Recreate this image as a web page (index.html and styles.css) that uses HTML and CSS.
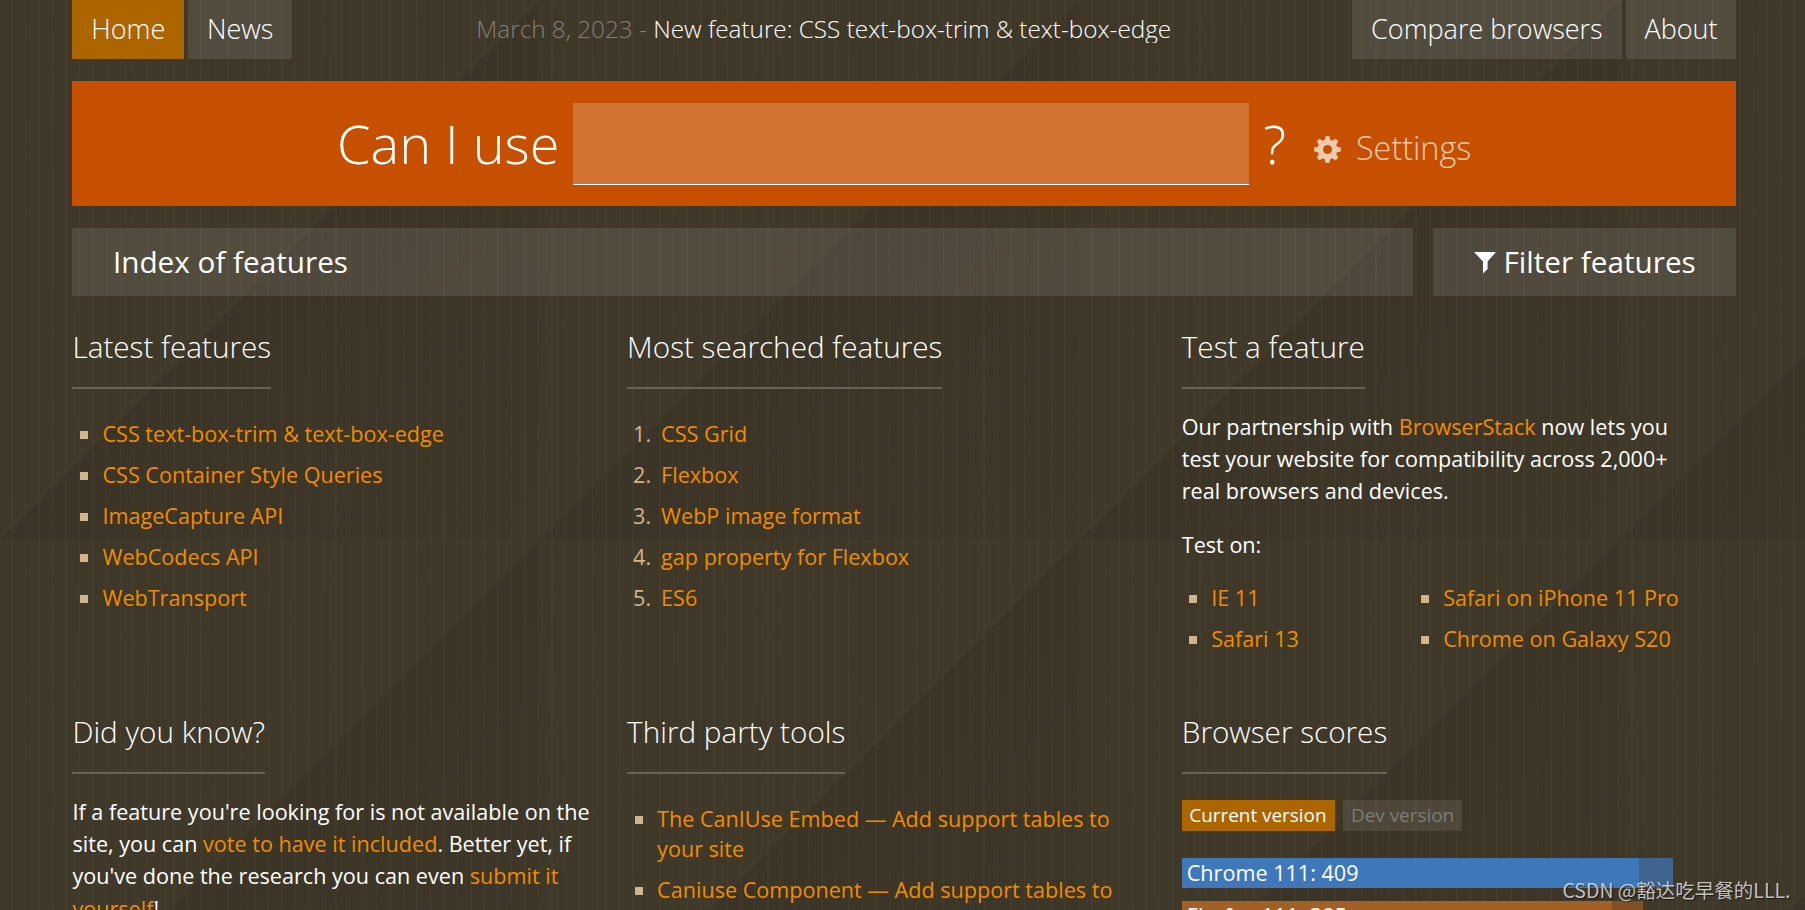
FILE: index.html
```
<!DOCTYPE html>
<html lang="en">
<head>
  <meta charset="UTF-8">
  <meta name="viewport" content="width=device-width, initial-scale=1.0">
  <title>Can I use... Support tables for HTML5, CSS3, etc</title>
  <link rel="stylesheet" href="styles.css">
</head>
<body>
  <div class="page">
    <header class="top">
      <nav class="nav">
        <a class="nav-link active" href="#">Home</a>
        <a class="nav-link" href="#">News</a>
      </nav>
      <div class="news"><span class="news-date">March 8, 2023 - </span><a href="#">New feature: CSS text-box-trim &amp; text-box-edge</a></div>
      <nav class="nav">
        <a class="nav-link" href="#">Compare browsers</a>
        <a class="nav-link" href="#">About</a>
      </nav>
    </header>

    <form class="search">
      <label class="search-label" for="feat_search">Can I use</label>
      <input class="search-input" type="text" id="feat_search">
      <span class="search-label">?</span>
      <a class="settings" href="#">
        <svg class="gear" viewBox="0 0 27 27">
          <g fill="currentColor">
            <path fill-rule="evenodd" d="M13.5 3.6a9.9 9.9 0 1 0 0 19.8a9.9 9.9 0 1 0 0-19.8zM13.5 9a4.5 4.5 0 1 1 0 9a4.5 4.5 0 1 1 0-9z"/>
            <path id="tooth" d="M10.4 5L11.6 0.3Q13.5-0.3 15.4 0.3L16.6 5z"/>
            <use href="#tooth" transform="rotate(45 13.5 13.5)"/>
            <use href="#tooth" transform="rotate(90 13.5 13.5)"/>
            <use href="#tooth" transform="rotate(135 13.5 13.5)"/>
            <use href="#tooth" transform="rotate(180 13.5 13.5)"/>
            <use href="#tooth" transform="rotate(225 13.5 13.5)"/>
            <use href="#tooth" transform="rotate(270 13.5 13.5)"/>
            <use href="#tooth" transform="rotate(315 13.5 13.5)"/>
          </g>
        </svg>
        <span>Settings</span>
      </a>
    </form>

    <div class="bar">
      <a class="bar-btn index" href="#">Index of features</a>
      <a class="bar-btn filter" href="#">
        <svg class="funnel" viewBox="0 0 22 22"><path fill="currentColor" d="M0 0H22L13.6 9.5V17L9 21.5V9.5z"/></svg>
        <span>Filter features</span>
      </a>
    </div>

    <main class="grid">
      <section class="box">
        <h2>Latest features</h2>
        <ul>
          <li><a href="#">CSS text-box-trim &amp; text-box-edge</a></li>
          <li><a href="#">CSS Container Style Queries</a></li>
          <li><a href="#">ImageCapture API</a></li>
          <li><a href="#">WebCodecs API</a></li>
          <li><a href="#">WebTransport</a></li>
        </ul>
      </section>

      <section class="box">
        <h2>Most searched features</h2>
        <ol>
          <li><a href="#">CSS Grid</a></li>
          <li><a href="#">Flexbox</a></li>
          <li><a href="#">WebP image format</a></li>
          <li><a href="#">gap property for Flexbox</a></li>
          <li><a href="#">ES6</a></li>
        </ol>
      </section>

      <section class="box">
        <h2>Test a feature</h2>
        <p>Our partnership with <a href="#">BrowserStack</a> now lets you test your website for compatibility across 2,000+ real browsers and devices.</p>
        <p>Test on:</p>
        <ul class="test-list">
          <li><a href="#">IE 11</a></li>
          <li><a href="#">Safari on iPhone 11 Pro</a></li>
          <li><a href="#">Safari 13</a></li>
          <li><a href="#">Chrome on Galaxy S20</a></li>
        </ul>
      </section>

      <section class="box">
        <h2>Did you know?</h2>
        <p>If a feature you're looking for is not available on the site, you can <a href="#">vote to have it included</a>. Better yet, if you've done the research you can even <a href="#">submit it yourself</a>!</p>
      </section>

      <section class="box">
        <h2>Third party tools</h2>
        <ul>
          <li><a href="#">The CanIUse Embed — Add support tables to your site</a></li>
          <li><a href="#">Caniuse Component — Add support tables to your presentations</a></li>
        </ul>
      </section>

      <section class="box">
        <h2>Browser scores</h2>
        <div class="versions">
          <button class="version on" type="button">Current version</button>
          <button class="version" type="button">Dev version</button>
        </div>
        <div class="score chrome">
          <div class="score-fill">Chrome 111: 409</div>
        </div>
        <div class="score firefox">
          <div class="score-fill">Firefox 111: 385</div>
        </div>
      </section>
    </main>
  </div>
  <div class="watermark">CSDN @豁达吃早餐的LLL.</div>
</body>
</html>
```
FILE: styles.css
```
* {
  box-sizing: border-box;
}
html {
  height: 100%;
  overflow: hidden;
}
body {
  margin: 0;
  height: 910px;
  overflow: hidden;
  color: #fff;
  font-family: "Open Sans", "Noto Sans", sans-serif;
  font-size: 21.6px;
  line-height: 1.5;
  background-color: #3f3829;
  background-image:
    repeating-linear-gradient(90deg, transparent 0, transparent 11.5px, rgba(255, 255, 255, 0.025) 11.5px, rgba(255, 255, 255, 0.025) 13px, transparent 13px, transparent 13.5px),
    linear-gradient(135deg, #3f3829 0%, #403829 50%, #3c3426 50%, #3f3728 100%);
  background-size: auto, 540px 540px;
}
a {
  color: #f08c00;
  text-decoration: none;
}
.page {
  width: 1664px;
  margin-left: 72.45px;
}

/* top navigation */
.top {
  display: flex;
  justify-content: space-between;
  height: 59px;
  font-weight: 300;
}
.nav {
  display: flex;
  gap: 4px;
}
.nav-link {
  padding: 0 18.9px;
  height: 59px;
  line-height: 57px;
  font-size: 27px;
  color: #fff;
  background: rgba(255, 255, 255, 0.1);
}
.nav-link.active {
  background: #ad6500;
}
.news {
  height: 43px;
  padding-left: 3px;
  overflow: hidden;
  line-height: 57px;
  font-size: 24.3px;
  white-space: pre;
}
.news a {
  color: #fff;
}
.news-date {
  color: #857e73;
}

/* search */
.search {
  display: flex;
  height: 125px;
  margin-top: 22px;
  padding: 22px 0 0 264.6px;
  background: #c75000;
}
.search-label {
  font-size: 54px;
  font-weight: 300;
  line-height: 81px;
}
.search-input {
  width: 676px;
  height: 82px;
  margin: 0 14px 0 13.8px;
  border: 0;
  border-bottom: 1px solid #fff;
  border-radius: 0;
  outline: 0;
  background: rgba(255, 255, 255, 0.2);
}
.settings {
  display: flex;
  margin-left: 28px;
  font-size: 32.4px;
  font-weight: 300;
  line-height: 89px;
  color: #efc9b0;
}
.gear {
  width: 27px;
  height: 27px;
  margin: 33px 15px 0 0;
}

/* index + filter */
.bar {
  display: flex;
  gap: 20px;
  margin-top: 22px;
}
.bar-btn {
  height: 68px;
  padding-left: 40.5px;
  font-size: 29.7px;
  line-height: 67px;
  color: #fff;
  background: rgba(255, 255, 255, 0.1);
}
.index {
  flex: 1;
}
.filter {
  display: flex;
  width: 303px;
}
.funnel {
  width: 22px;
  height: 22px;
  margin: 24px 7.5px 0 0;
}

/* boxes */
.grid {
  display: grid;
  grid-template-columns: repeat(3, 1fr);
  grid-template-rows: 385px auto;
  padding-top: 30px;
}
.box {
  padding-right: 32px;
}
h2 {
  width: fit-content;
  margin: 0;
  height: 63px;
  font-size: 29.7px;
  font-weight: 300;
  line-height: 41px;
  white-space: nowrap;
  border-bottom: 2px solid #6a6254;
}
p {
  margin: 21.6px 0 0;
}
ul, ol {
  margin: 30px 0 0;
  padding: 0;
  list-style: none;
  counter-reset: item;
}
li {
  display: flex;
  margin-bottom: 11px;
  padding-left: 8px;
  line-height: 30px;
  color: #d2b48c;
}
ul li::before {
  content: "";
  flex: none;
  width: 8px;
  height: 8px;
  margin: 12px 14px 0 0;
  background: #d2b48c;
}
ol li {
  padding-left: 0;
  counter-increment: item;
}
ol li::before {
  content: counter(item) ".";
  width: 24px;
  margin-right: 10px;
  text-align: right;
}
.test-list {
  display: grid;
  grid-template-columns: 232px 1fr;
  margin-top: 21px;
}
.test-list li {
  padding-left: 7.4px;
}

/* browser scores */
.versions {
  display: flex;
  gap: 8px;
  margin: 26px 0 27px;
}
.version {
  height: 31px;
  padding: 0 8px 1px;
  border: 0;
  font-family: inherit;
  font-size: 18.9px;
  line-height: 30px;
  color: #807b74;
  background: rgba(255, 255, 255, 0.09);
}
.version.on {
  padding-left: 7.5px;
  padding-right: 8.5px;
  color: #fff;
  background: #ad6500;
}
.score {
  height: 30px;
  margin-bottom: 13px;
  line-height: 30px;
}
.score-fill {
  height: 30px;
  padding-left: 5px;
}
.chrome {
  width: 491px;
  background: #3f648f;
}
.chrome .score-fill {
  width: 457px;
  background: #3f77bb;
}
.firefox {
  width: 461px;
  background: #815126;
}
.firefox .score-fill {
  width: 430px;
  background: #a36025;
}

.watermark {
  position: absolute;
  right: 14.5px;
  bottom: 5px;
  font-family: "Noto Sans CJK SC", sans-serif;
  font-size: 19.5px;
  line-height: 30px;
  color: rgba(255, 255, 255, 0.72);
  text-shadow: 1px 1px 1px rgba(0, 0, 0, 0.6);
}
```
